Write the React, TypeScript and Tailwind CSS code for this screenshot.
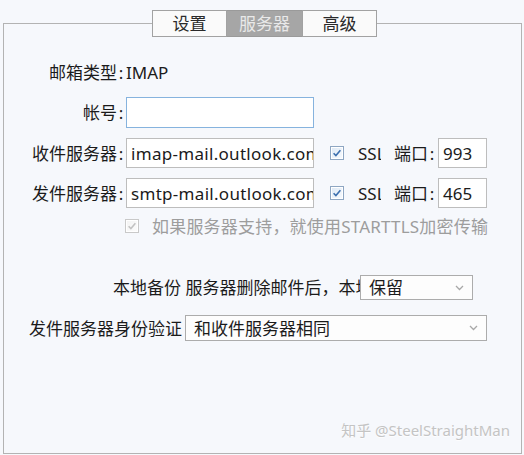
import React from "react";

const FONT = { fontFamily: '"Noto Sans", "Noto Sans CJK SC", sans-serif' };

function Check({ disabled = false }: { disabled?: boolean }) {
  return (
    <svg width="14" height="14" viewBox="0 0 14 14" className="shrink-0">
      <defs>
        <linearGradient id={disabled ? "gd" : "ge"} x1="0" y1="0" x2="1" y2="1">
          <stop offset="0" stopColor={disabled ? "#f4f4f4" : "#dfeaf6"} />
          <stop offset="1" stopColor={disabled ? "#fbfbfb" : "#f6f9fd"} />
        </linearGradient>
      </defs>
      <rect x="0.5" y="0.5" width="13" height="13" fill="#fff" stroke={disabled ? "#c9c9c9" : "#8ea6c2"} />
      <rect x="2" y="2" width="10" height="10" fill={`url(#${disabled ? "gd" : "ge"})`} />
      <path d="M3.6 7.2 L5.9 9.5 L10.4 4.3" fill="none" stroke={disabled ? "#c2c2c2" : "#3c6fae"} strokeWidth="1.6" />
    </svg>
  );
}

function Label({ text }: { text: string }) {
  return (
    <div className="w-[121px] flex justify-end items-center shrink-0">
      <span>{text}</span>
      <span className="w-[8px] text-center">:</span>
    </div>
  );
}

function Chevron() {
  return (
    <svg width="9" height="6" viewBox="0 0 9 6" className="shrink-0">
      <path d="M1 1 L4.5 4.5 L8 1" fill="none" stroke="#a8a8a8" strokeWidth="1.3" />
    </svg>
  );
}

export default function App() {
  return (
    <div
      className="w-[524px] h-[455px] bg-[#f6f8fc] relative overflow-hidden pt-[10px] px-[3px] text-[17px] text-[#1b1b1b] leading-none"
      style={FONT}
    >
      {/* tabs */}
      <div className="flex pl-[149px] relative z-10">
        <div className="w-[75px] h-[27px] border border-[#a2a2a2] bg-[#fafafa] flex items-center justify-center text-[#2a2a2a]">
          设置
        </div>
        <div className="w-[75px] h-[27px] border-y border-[#9a9a9a] bg-[#a6a6a6] flex items-center justify-center text-[#e9e9e9]">
          服务器
        </div>
        <div className="w-[75px] h-[27px] border border-[#a2a2a2] bg-[#fafafa] flex items-center justify-center text-[#2a2a2a]">
          高级
        </div>
      </div>

      {/* panel */}
      <div className="-mt-[14px] h-[431px] w-[519px] border border-[#b3b3b3] bg-[#f6f8fc] pt-[33px] flex flex-col">
        {/* mailbox type */}
        <div className="h-[30px] flex items-center">
          <Label text="邮箱类型" />
          <span className="ml-[1px]">IMAP</span>
        </div>

        {/* account */}
        <div className="mt-[10px] h-[31px] flex items-center">
          <Label text="帐号" />
          <div className="ml-[1px] w-[188px] h-[31px] border border-[#86b3de] bg-white" />
        </div>

        {/* incoming */}
        <div className="mt-[10px] h-[30px] flex items-center">
          <Label text="收件服务器" />
          <div className="ml-[1px] w-[188px] h-[30px] border border-[#bdbdbd] bg-white pl-[4px] flex items-center overflow-hidden whitespace-nowrap tracking-[0.3px]">
            imap-mail.outlook.com
          </div>
          <div className="ml-[16px] flex items-center">
            <Check />
          </div>
          <div className="ml-[14px] w-[23px] overflow-hidden whitespace-nowrap">SSL</div>
          <div className="ml-[13px] flex items-center">
            <span>端口</span>
            <span className="w-[8px] text-center">:</span>
          </div>
          <div className="ml-[2px] w-[49px] h-[30px] border border-[#bdbdbd] bg-white pl-[4px] flex items-center">
            993
          </div>
        </div>

        {/* outgoing */}
        <div className="mt-[10px] h-[30px] flex items-center">
          <Label text="发件服务器" />
          <div className="ml-[1px] w-[188px] h-[30px] border border-[#bdbdbd] bg-white pl-[4px] flex items-center overflow-hidden whitespace-nowrap tracking-[0.3px]">
            smtp-mail.outlook.com
          </div>
          <div className="ml-[16px] flex items-center">
            <Check />
          </div>
          <div className="ml-[14px] w-[23px] overflow-hidden whitespace-nowrap">SSL</div>
          <div className="ml-[13px] flex items-center">
            <span>端口</span>
            <span className="w-[8px] text-center">:</span>
          </div>
          <div className="ml-[2px] w-[49px] h-[30px] border border-[#bdbdbd] bg-white pl-[4px] flex items-center">
            465
          </div>
        </div>

        {/* starttls */}
        <div className="mt-[4px] h-[28px] flex items-center pl-[121px]">
          <Check disabled />
          <span className="ml-[13px] text-[#9d9d9d] whitespace-nowrap tracking-[0.2px]">如果服务器支持，就使用STARTTLS加密传输</span>
        </div>

        {/* local backup */}
        <div className="mt-[35px] h-[25px] flex items-center">
          <div className="ml-[109px] w-[247px] overflow-hidden whitespace-nowrap">本地备份 服务器删除邮件后，本地</div>
          <div className="w-[113px] h-[25px] border border-[#acacac] bg-[#fdfdfd] flex items-center justify-between pl-[8px] pr-[8px]">
            <span>保留</span>
            <Chevron />
          </div>
        </div>

        {/* outgoing auth */}
        <div className="mt-[15px] h-[26px] flex items-center">
          <div className="ml-[25px] w-[156px] overflow-hidden whitespace-nowrap">发件服务器身份验证</div>
          <div className="w-[302px] h-[26px] border border-[#acacac] bg-[#fdfdfd] flex items-center justify-between pl-[8px] pr-[8px]">
            <span>和收件服务器相同</span>
            <Chevron />
          </div>
        </div>
      </div>

      {/* watermark */}
      <div className="absolute right-[14px] top-[423px] text-[15px] text-[#c4c4c4] whitespace-nowrap [text-shadow:0_1px_1px_rgba(255,255,255,0.9)]">
        知乎 @SteelStraightMan
      </div>
    </div>
  );
}
